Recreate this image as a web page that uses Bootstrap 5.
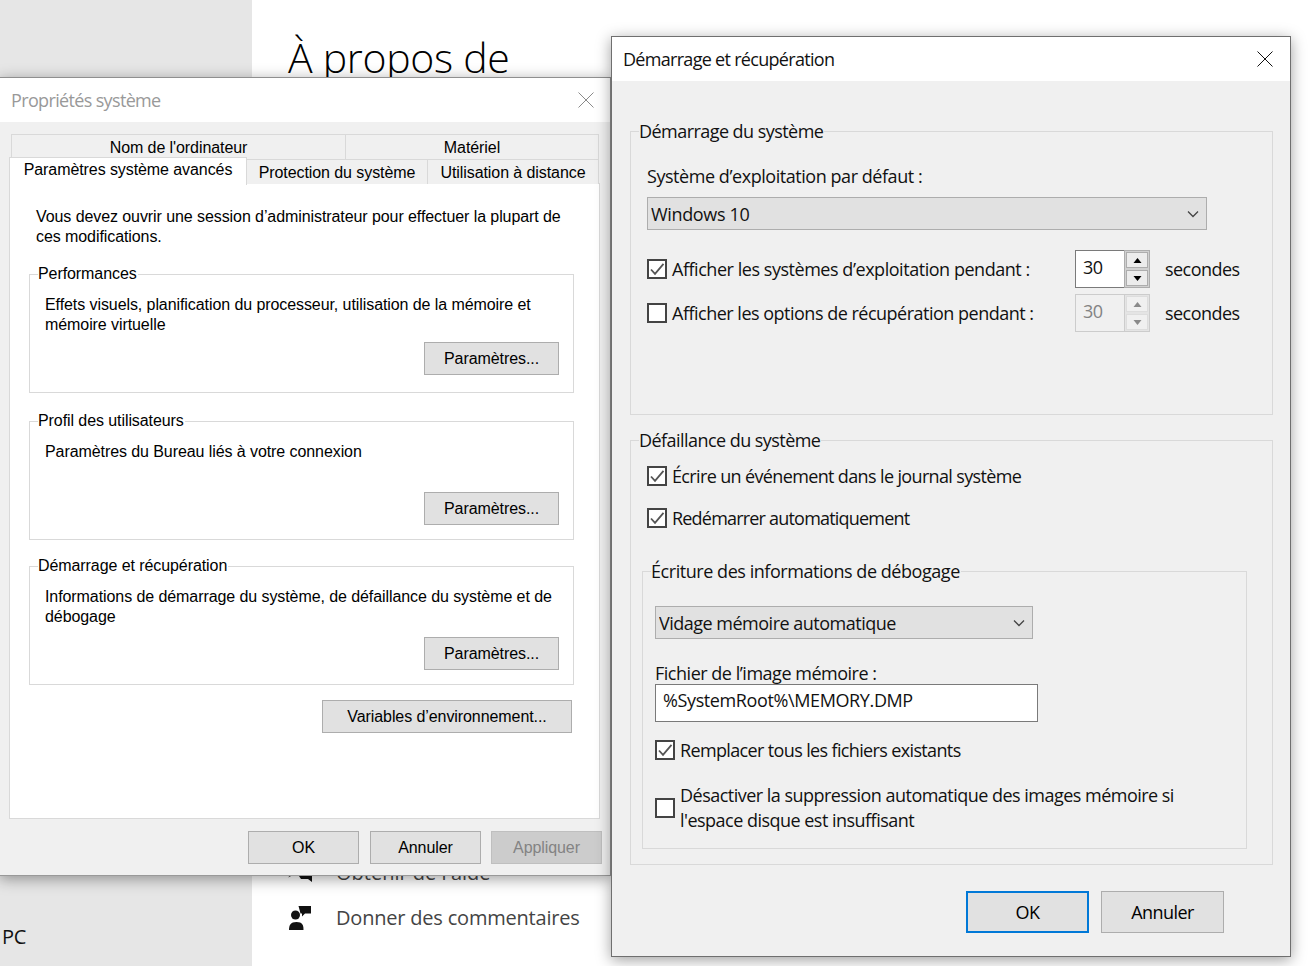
<!DOCTYPE html>
<html lang="fr">
<head>
<meta charset="utf-8">
<title>Propriétés système</title>
<link href="https://cdn.jsdelivr.net/npm/bootstrap@5.3.0/dist/css/bootstrap.min.css" rel="stylesheet">
<style>
html,body{margin:0;height:966px;overflow:hidden;background:#fff}
.desk{position:relative;width:1315px;height:966px;overflow:hidden}
.side{width:252px;background:#e6e6e6;color:#111;font:20px "Open Sans",sans-serif;padding:0 0 16px 2px;letter-spacing:-.3px}
.mainp{padding:29px 0 0 36px;font-family:"Open Sans",sans-serif}
.bigt{font-size:41px;line-height:56px;margin:0;font-weight:300;color:#000;font-family:"Open Sans",sans-serif;letter-spacing:-.3px}
.helpi{font-size:20px;line-height:28px;color:#444;gap:23px;letter-spacing:-.2px}
.helpi svg{flex:none}
.helpt{letter-spacing:0}
.helpb{margin:17px 0 34px}
.win{position:absolute;background:#f0f0f0;box-shadow:0 3px 14px rgba(0,0,0,.38)}
.wl{left:-1px;top:77px;width:612px;height:799px;border:1px solid #8f8f8f;border-bottom-color:#999;font:16px/20px "Liberation Sans",sans-serif;color:#000;letter-spacing:-.08px}
.wr{left:611px;top:36px;width:680px;height:921px;border:1px solid #6f6f6f;font:18px/24px "Open Sans",sans-serif;letter-spacing:-.55px;color:#111}
.ttl{background:#fff;padding:0 16px 0 11px;align-items:center}
.wl .ttl{height:44px;color:#999;font:18px "Open Sans",sans-serif;letter-spacing:-.65px}
.wr .ttl{height:44px;color:#111;letter-spacing:-.7px;padding-right:17px}
.xbtn{width:16px;height:16px;color:#111}
.wl .xbtn{color:#8a8a8a}
.tabs1,.tabs2{margin-left:12px;width:587px;height:25px}
.tabs1{margin-top:12px}
.tabc{background:#f0f0f0;border:1px solid #d9d9d9;border-bottom:0;text-align:center;line-height:25px;margin-left:-1px;white-space:nowrap}
.tabc.on{background:#fff;height:28px;margin-top:-2px;margin-left:-3px;line-height:23px;position:relative;z-index:2;width:238px}
.tabs1 .tabn{width:335px}
.tabs2 .tabn{width:182px}
.tabp{margin:-1px 0 0 9px;width:591px;height:636px;background:#fff;border:1px solid #d9d9d9;padding:23px 19px 0 19px}
.tabp p{margin:0 0 0 7px;width:540px}
.grp{border:1px solid #d9d9d9;padding:0;margin:0;min-width:0}
.grp legend{float:none;width:auto;margin:0;padding:0;font:inherit;line-height:inherit;letter-spacing:inherit}
.wl .grp{margin-top:17px;width:545px;height:129px;padding:0 14px 0 15px}
.wl .grp legend{margin-left:-7px;padding-right:1px}
.wl .grp.g2{margin-top:18px}
.wl .grp.g3{margin-top:16px}
.wl .grp>div:first-of-type{padding-top:11px;height:58px}
.wl .grp.g2>div:first-of-type,.wl .grp.g3>div:first-of-type{height:61px}
.envr{margin:15px 8px 0 0}
.foot{margin:12px 0 0 248px;gap:11px}
.foot .dbtn:last-child{margin-left:-1px}
.dbtn{background:#e1e1e1;border:1px solid #adadad;border-radius:0;color:#000;font:inherit;letter-spacing:inherit;padding:0;line-height:1}
.dbtn:disabled{background:#ccc;border-color:#bfbfbf;color:#838383;opacity:1}
.dbtn:hover{background:#e1e1e1;border-color:#adadad;color:#000}
.bp{width:135px;height:33px}
.bv{width:250px;height:33px}
.bb{width:111px;height:33px}
.wr .bm{width:123px;height:42px}
.wr .bm.dflt{border:2px solid #0078d7}
.dsel{display:block;background-color:#e1e1e1;border:1px solid #adadad;border-radius:0;color:#111;font:inherit;letter-spacing:inherit;padding:0 0 0 3px;box-shadow:none;background-image:url("data:image/svg+xml,%3Csvg xmlns='http://www.w3.org/2000/svg' viewBox='0 0 12 8'%3E%3Cpath d='M1 1.500l5 5 5-5' fill='none' stroke='%23444' stroke-width='1.300'/%3E%3C/svg%3E");background-size:12px 8px;background-position:right 7px center;height:33px}
.ck{flex:none;width:20px;height:20px;border:2px solid #444;background:#fff;display:flex;align-items:center;justify-content:center}
.ck svg{width:16px;height:16px}
.gr1{margin:38px 0 0 18px;width:643px;height:296px;padding:0 8px 0 16px}
.gr1 legend,.gr2 legend{margin-left:-8px;padding-right:1px}
.oslab{margin-top:21px;letter-spacing:-.45px}
.ossel{width:560px;margin-top:9px;letter-spacing:-.35px}
.row1{margin-top:20px;height:38px}
.row2{margin-top:6px;height:38px}
.lblw{width:398px;letter-spacing:-.46px}
.lblo{letter-spacing:-.5px}
.secd{margin-left:10px}
.gr2{margin:13px 0 0 18px;width:643px;height:437px;padding:0 25px 0 16px}
.gr3{margin:29px 0 0 -5px;width:605px;height:290px;padding:0 8px 0 12px}
.gr3 legend{margin-left:-4px;padding-right:1px;letter-spacing:-.45px}
.spn{width:75px;height:38px;color:#111;line-height:32px}
.spnv{flex:1;border:1px solid #7a7a7a;border-right:0;background:#fff;padding-left:7px}
.arr{width:26px;flex:none;padding:1px;border:1px solid #adadad;gap:2px;background:#d0d0d0}
.arr span{flex:1;display:flex;align-items:center;justify-content:center;background:#ececec;border:1px solid #adadad}
.arr svg{width:9px;height:5px;fill:#000}
.spn.off{color:#838383}
.spn.off .spnv{border-color:#ccc;background:#f0f0f0}
.spn.off .arr{border-color:#ccc;background:#e4e4e4}
.spn.off .arr span{border-color:#ddd;background:#f0f0f0}
.spn.off .arr svg{fill:#8a8a8a}
.dinp{width:383px;height:38px;background:#fff;border:1px solid #7a7a7a;line-height:31px;padding-left:7px;margin-top:-1px;letter-spacing:-.38px}
.rw{gap:5px;align-items:center}
.tight{letter-spacing:-.64px}
.tight2{letter-spacing:-.8px}
.ck1{margin-top:12px}
.ck2{margin-top:18px}
.sel3{width:378px;margin-top:23px;letter-spacing:-.5px}
.lab3{margin-top:22px;letter-spacing:-.48px}
.ck3{margin-top:16px}
.ck4{margin-top:21px;line-height:25px;letter-spacing:-.52px}
.foot2{margin:26px 0 0 354px;gap:12px}
</style>
</head>
<body>
<div class="desk d-flex">
  <aside class="side d-flex flex-column justify-content-end flex-shrink-0">PC</aside>
  <main class="mainp flex-grow-1 d-flex flex-column">
    <h1 class="bigt">À propos de</h1>
    <div class="flex-grow-1"></div>
    <div class="helpi d-flex align-items-center"><svg width="25" height="24" viewBox="0 0 25 24" fill="#111"><path d="M0 16.500l3-3 1 1zM9 12h15v9l-4-3h-7z"/></svg><span class="helpt">Obtenir de l'aide</span></div>
    <div class="helpi helpb d-flex align-items-center"><svg width="25" height="24" viewBox="0 0 25 24" fill="#111"><circle cx="7.500" cy="9" r="4.500"/><path d="M1 24c0-5 1.500-8 7.500-8s7 3 7 8z"/><path d="M10.500 0H23v7.500h-6L14 10.500v-3h-1.500z"/></svg><span>Donner des commentaires</span></div>
  </main>

  <section class="win wl">
    <div class="ttl d-flex justify-content-between"><span>Propriétés système</span>
      <svg class="xbtn" viewBox="0 0 16 16"><path d="M.5.5l15 15M15.500.5l-15 15" stroke="currentColor" fill="none"/></svg></div>
    <div class="tabs1 d-flex"><div class="tabc tabn">Nom de l'ordinateur</div><div class="tabc flex-grow-1">Matériel</div></div>
    <div class="tabs2 d-flex"><div class="tabc on">Paramètres système avancés</div><div class="tabc tabn">Protection du système</div><div class="tabc flex-grow-1">Utilisation à distance</div></div>
    <div class="tabp">
      <p>Vous devez ouvrir une session d’administrateur pour effectuer la plupart de ces modifications.</p>
      <fieldset class="grp"><legend>Performances</legend>
        <div>Effets visuels, planification du processeur, utilisation de la mémoire et mémoire virtuelle</div>
        <div class="d-flex justify-content-end"><button class="btn dbtn bp" type="button">Paramètres...</button></div>
      </fieldset>
      <fieldset class="grp g2"><legend>Profil des utilisateurs</legend>
        <div>Paramètres du Bureau liés à votre connexion</div>
        <div class="d-flex justify-content-end"><button class="btn dbtn bp" type="button">Paramètres...</button></div>
      </fieldset>
      <fieldset class="grp g3"><legend>Démarrage et récupération</legend>
        <div>Informations de démarrage du système, de défaillance du système et de débogage</div>
        <div class="d-flex justify-content-end"><button class="btn dbtn bp" type="button">Paramètres...</button></div>
      </fieldset>
      <div class="d-flex justify-content-end envr"><button class="btn dbtn bv" type="button">Variables d’environnement...</button></div>
    </div>
    <div class="d-flex foot"><button class="btn dbtn bb" type="button">OK</button><button class="btn dbtn bb" type="button">Annuler</button><button class="btn dbtn bb" type="button" disabled>Appliquer</button></div>
  </section>

  <section class="win wr">
    <div class="ttl d-flex justify-content-between"><span>Démarrage et récupération</span>
      <svg class="xbtn" viewBox="0 0 16 16"><path d="M.5.5l15 15M15.500.5l-15 15" stroke="currentColor" fill="none"/></svg></div>
    <fieldset class="grp gr1"><legend>Démarrage du système</legend>
      <div class="oslab">Système d’exploitation par défaut :</div>
      <select class="form-select dsel ossel"><option>Windows 10</option></select>
      <div class="d-flex rw row1"><span class="ck"><svg viewBox="0 0 16 16"><path d="M2 8.500l4 4.300 8.500-10" fill="none" stroke="#555" stroke-width="1.800"/></svg></span><span class="lblw">Afficher les systèmes d’exploitation pendant :</span><div class="spn d-flex"><span class="spnv">30</span><div class="arr d-flex flex-column"><span><svg viewBox="0 0 8 5"><path d="M4 0l4 5H0z"/></svg></span><span><svg viewBox="0 0 8 5"><path d="M0 0h8L4 5z"/></svg></span></div></div><span class="secd">secondes</span></div>
      <div class="d-flex rw row2"><span class="ck"></span><span class="lblw lblo">Afficher les options de récupération pendant :</span><div class="spn off d-flex"><span class="spnv">30</span><div class="arr d-flex flex-column"><span><svg viewBox="0 0 8 5"><path d="M4 0l4 5H0z"/></svg></span><span><svg viewBox="0 0 8 5"><path d="M0 0h8L4 5z"/></svg></span></div></div><span class="secd">secondes</span></div>
    </fieldset>
    <fieldset class="grp gr2"><legend>Défaillance du système</legend>
      <div class="d-flex rw ck1"><span class="ck"><svg viewBox="0 0 16 16"><path d="M2 8.500l4 4.300 8.500-10" fill="none" stroke="#555" stroke-width="1.800"/></svg></span><span class="tight">Écrire un événement dans le journal système</span></div>
      <div class="d-flex rw ck2"><span class="ck"><svg viewBox="0 0 16 16"><path d="M2 8.500l4 4.300 8.500-10" fill="none" stroke="#555" stroke-width="1.800"/></svg></span><span class="tight2">Redémarrer automatiquement</span></div>
      <fieldset class="grp gr3"><legend>Écriture des informations de débogage</legend>
        <select class="form-select dsel sel3"><option>Vidage mémoire automatique</option></select>
        <div class="lab3">Fichier de l’image mémoire :</div>
        <div class="dinp">%SystemRoot%\MEMORY.DMP</div>
        <div class="d-flex rw ck3"><span class="ck"><svg viewBox="0 0 16 16"><path d="M2 8.500l4 4.300 8.500-10" fill="none" stroke="#555" stroke-width="1.800"/></svg></span><span class="tight">Remplacer tous les fichiers existants</span></div>
        <div class="d-flex rw ck4"><span class="ck"></span><span>Désactiver la suppression automatique des images mémoire si l'espace disque est insuffisant</span></div>
      </fieldset>
    </fieldset>
    <div class="d-flex foot2"><button class="btn dbtn bm dflt" type="button">OK</button><button class="btn dbtn bm" type="button">Annuler</button></div>
  </section>
</div>
<script src="https://cdn.jsdelivr.net/npm/bootstrap@5.3.0/dist/js/bootstrap.bundle.min.js"></script>
</body>
</html>
